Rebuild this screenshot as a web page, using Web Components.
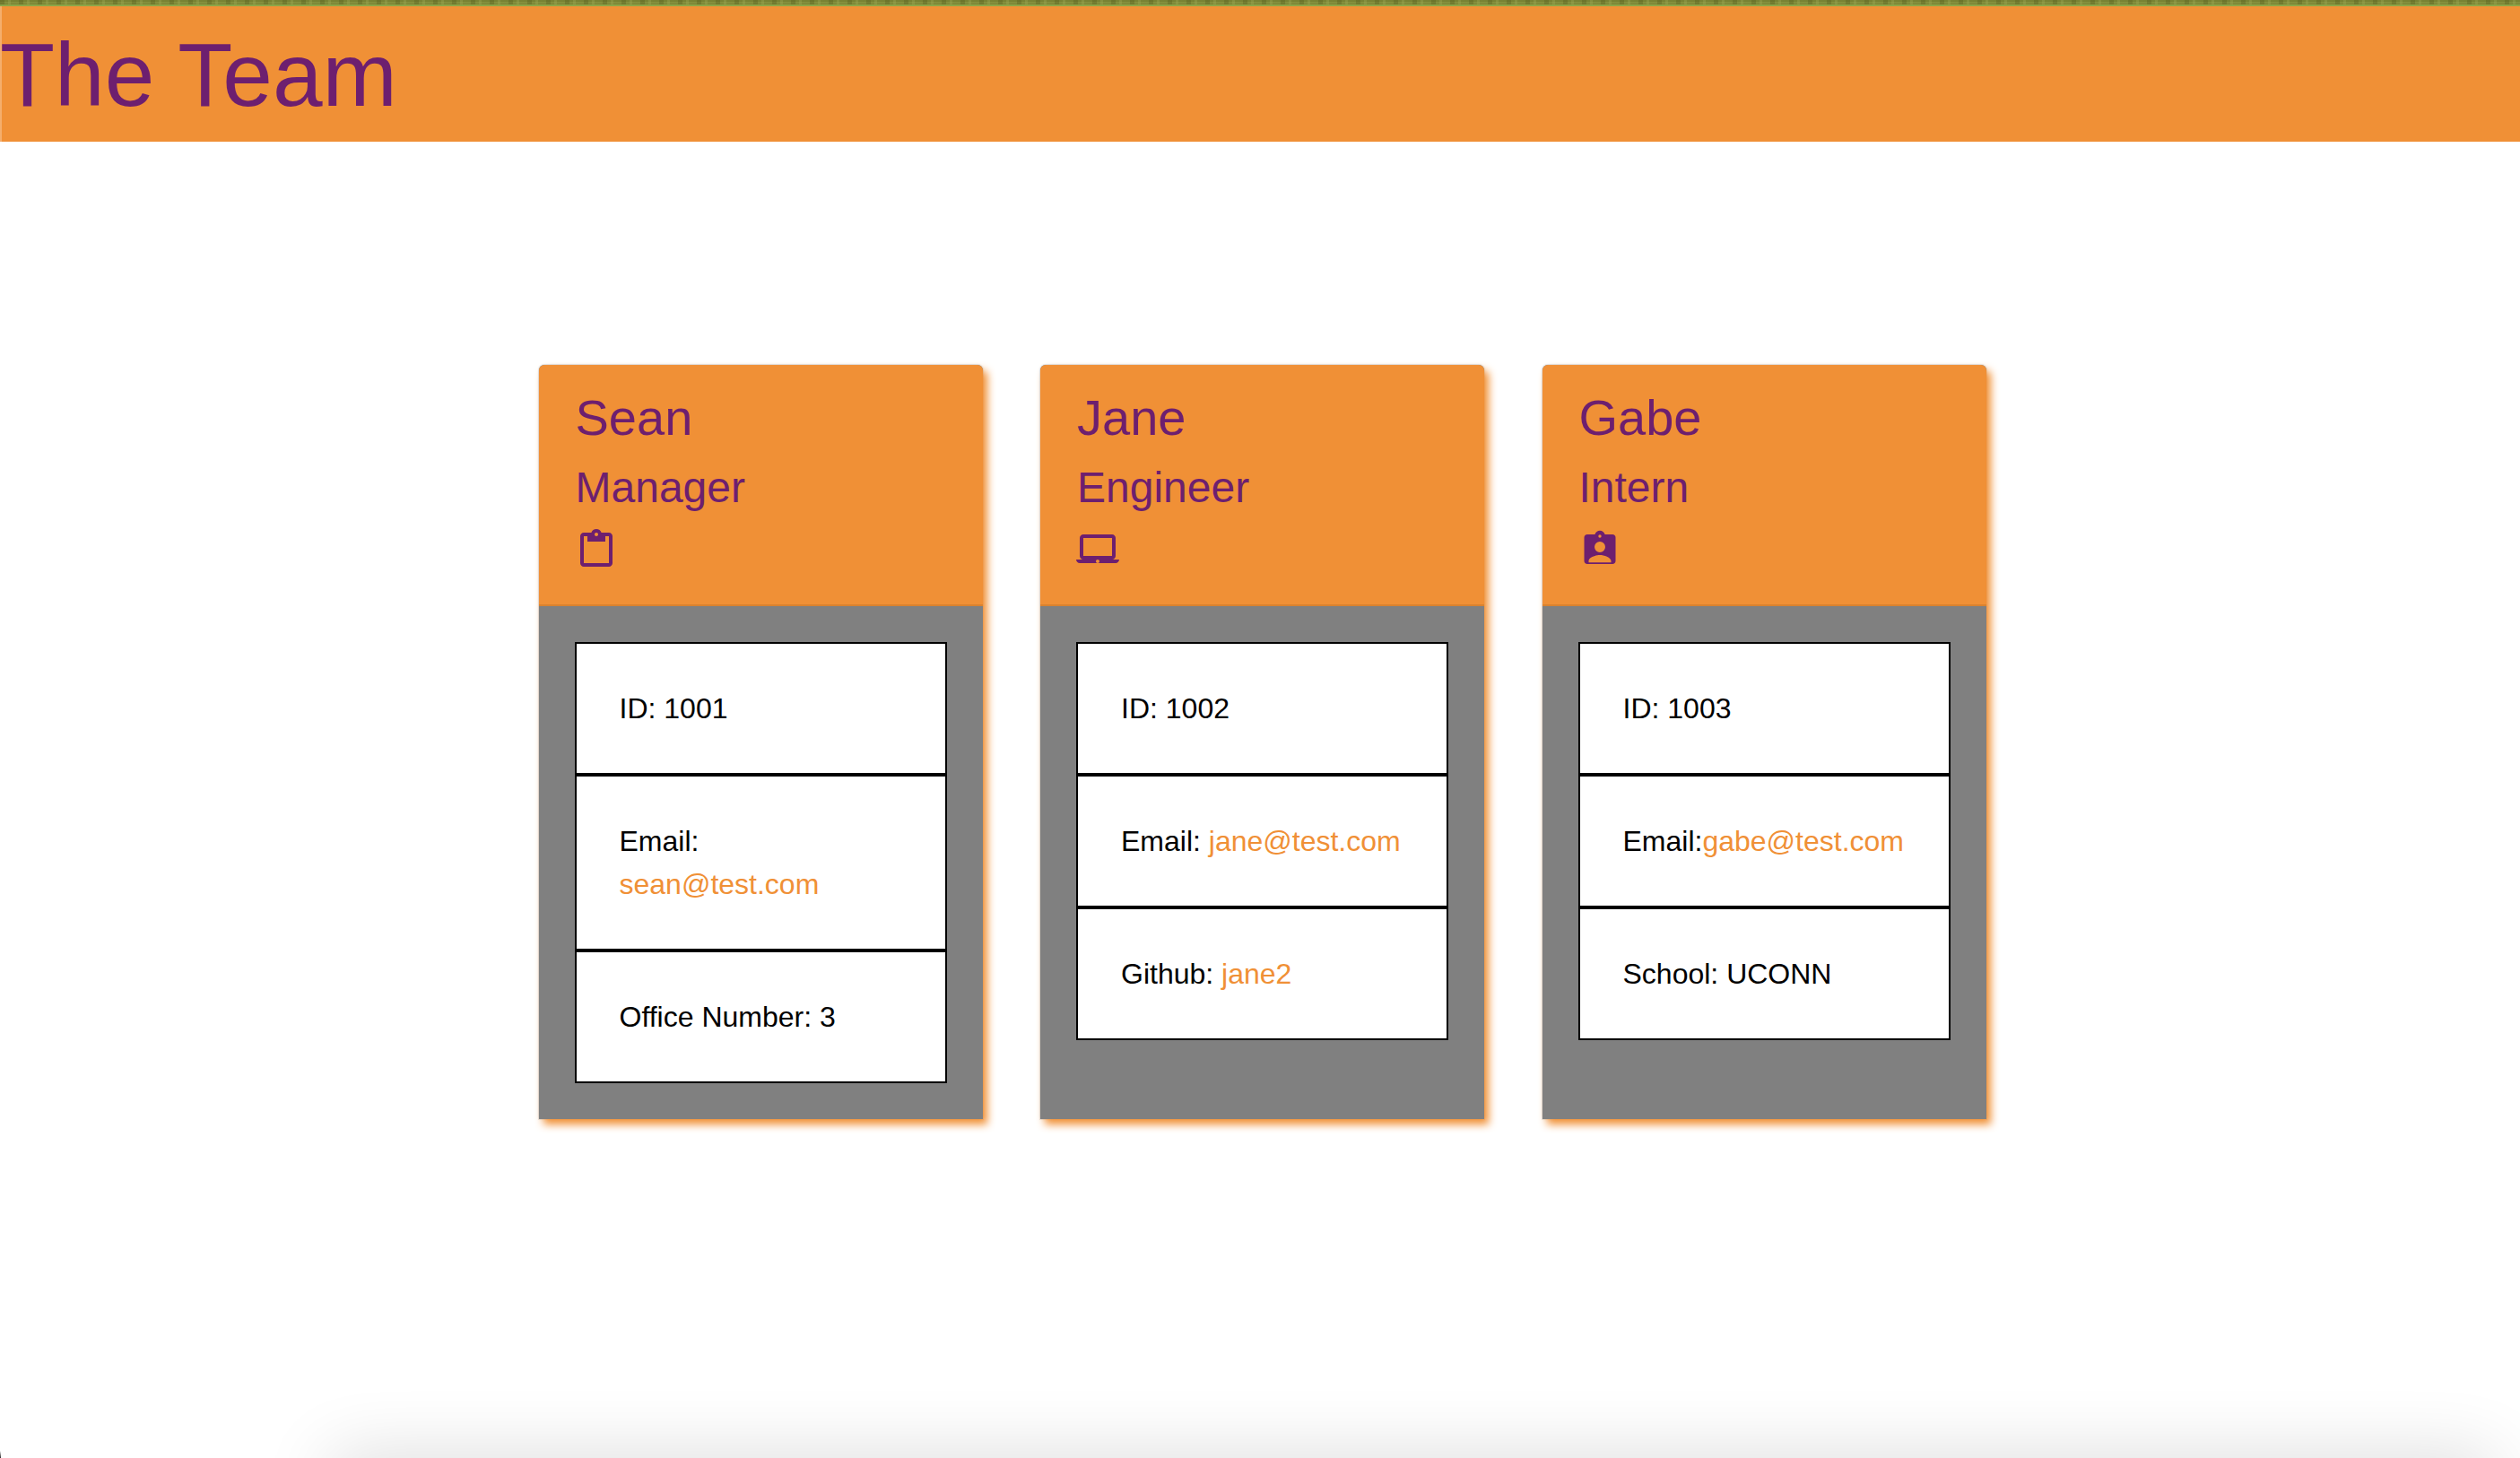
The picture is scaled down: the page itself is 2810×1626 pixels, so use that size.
<!DOCTYPE html>
<html>
<head>
<meta charset="utf-8">
<title>The Team</title>
<style>
html, body { margin: 0; padding: 0; height: 100%; background: #fff; overflow: hidden; }
body { font-family: "Liberation Sans", Arial, sans-serif; font-size: 32px; line-height: 48px; color: #000; }
</style>
</head>
<body>
<page-shell>
  <team-header slot="header">The Team</team-header>
  <employee-card name="Sean" role="Manager" icon="clipboard">
    <info-row>ID: 1001</info-row>
    <info-row>Email: <a>sean@test.com</a></info-row>
    <info-row>Office Number: 3</info-row>
  </employee-card>
  <employee-card name="Jane" role="Engineer" icon="laptop">
    <info-row>ID: 1002</info-row>
    <info-row>Email: <a>jane@test.com</a></info-row>
    <info-row>Github: <a>jane2</a></info-row>
  </employee-card>
  <employee-card name="Gabe" role="Intern" icon="badge">
    <info-row>ID: 1003</info-row>
    <info-row>Email:<a>gabe@test.com</a></info-row>
    <info-row>School: UCONN</info-row>
  </employee-card>
</page-shell>

<script>
// page frame: strip on top, header, row of cards
class PageShell extends HTMLElement {
  constructor() {
    super();
    this.attachShadow({mode: 'open'}).innerHTML = `
<style>
:host { display: block; position: relative; height: 1626px; overflow: hidden; }
.strip { height: 5px; background-color: #7f8a38;
  background-image:
    repeating-linear-gradient(90deg, rgba(80,85,25,.3) 0 5px, transparent 5px 9px, rgba(165,175,90,.3) 9px 12px, transparent 12px 21px),
    repeating-linear-gradient(180deg, rgba(80,85,25,.15) 0 2px, rgba(165,175,90,.12) 2px 4px); }
.strip-edge { height: 2px; background: #8ca648; }
.cards { display: flex; justify-content: center; gap: 64.5px; padding-top: 249px; align-items: flex-start; margin-left: 5px; }
.fade { position: absolute; left: 370px; right: 30px; bottom: -60px; height: 60px;
  box-shadow: 0 0 80px rgba(0,0,0,.16); }
.corner { position: absolute; left: 0; bottom: 0; width: 1px; height: 8px;
  background: linear-gradient(#fff, #222); }
</style>
<div class="strip"></div>
<div class="strip-edge"></div>
<slot name="header"></slot>
<div class="cards"><slot></slot></div>
<div class="fade"></div>
<div class="corner"></div>`;
  }
}

class TeamHeader extends HTMLElement {
  constructor() {
    super();
    this.attachShadow({mode: 'open'}).innerHTML = `
<style>
:host { display: block; height: 151px; background: #f09036; color: #6d1f6f;
  box-shadow: inset 2px 0 #f5ae6c; font-size: 100px; line-height: 153px; }
</style>
<slot></slot>`;
  }
}

const ICONS = {
  clipboard: '<path fill="currentColor" fill-rule="evenodd" d="M19 3h-4.200C14.400 1.800 13.300 1 12 1s-2.400.8-2.800 2H5c-1.100 0-2 .9-2 2v15c0 1.100.9 2 2 2h14c1.100 0 2-.9 2-2V5c0-1.100-.9-2-2-2zm-7 0c.6 0 1 .4 1 1s-.4 1-1 1-1-.4-1-1 .4-1 1-1zm7 17H5V5h2v3h10V5h2v15z"/>',
  laptop: '<path fill="currentColor" fill-rule="evenodd" d="M20 18c1.100 0 2-.9 2-2V6c0-1.100-.9-2-2-2H4c-1.100 0-2 .9-2 2v10c0 1.100.9 2 2 2H0c0 1.100.9 2 2 2h20c1.100 0 2-.9 2-2h-4zM4 6h16v10H4V6zm8 14c-.55 0-1-.45-1-1s.45-1 1-1 1 .45 1 1-.45 1-1 1z"/>',
  badge: '<path fill="currentColor" fill-rule="evenodd" d="M5 4h4.200C9.600 2.800 10.700 1.900 12 1.900s2.400.9 2.800 2.100H19c1 0 1.750.75 1.750 1.750v13c0 1-.75 1.750-1.750 1.750H5c-1 0-1.750-.75-1.750-1.750v-13C3.250 4.750 4 4 5 4zm7 .15a.85.85 0 1 0 0 1.700.85.85 0 0 0 0-1.700zM12 8a3 3 0 1 0 0 6 3 3 0 0 0 0-6zM5.750 19.600v-.8c0-2 4-3.300 6.250-3.300s6.250 1.300 6.250 3.300v.8z"/>'
};

class EmployeeCard extends HTMLElement {
  constructor() {
    super();
    this.attachShadow({mode: 'open'}).innerHTML = `
<style>
:host { display: block; width: 495px; height: 841px;
  box-shadow: 5px 6px 10px rgb(241,144,53), 0 0 0 1px rgba(0,0,0,.08), 0 0 3px rgba(0,0,0,.12);
  border-radius: 6px 6px 0 0; background: #808080; }
.top { height: 269px; box-sizing: border-box; padding: 25px 40px 0; background: #f09036; color: #6d1f6f;
  border-radius: 6px 6px 0 0; border-bottom: 2px solid #d9822f; }
.name { font-size: 56px; line-height: 67px; margin-left: 1px; }
.role { font-size: 48px; line-height: 58px; margin: 16px 0 0 1px; }
svg { display: block; width: 48px; height: 48px; margin-top: 15px; }
.body { padding: 40px 40px 0; }
.list { border: 2px solid #000; background: #fff; }
</style>
<div class="top">
  <div class="name"></div>
  <div class="role"></div>
  <svg viewBox="0 0 24 24"></svg>
</div>
<div class="body"><div class="list"><slot></slot></div></div>`;
  }
  connectedCallback() {
    const root = this.shadowRoot;
    root.querySelector('.name').textContent = this.getAttribute('name');
    root.querySelector('.role').textContent = this.getAttribute('role');
    root.querySelector('svg').innerHTML = ICONS[this.getAttribute('icon')];
  }
}

class InfoRow extends HTMLElement {
  constructor() {
    super();
    this.attachShadow({mode: 'open'}).innerHTML = `
<style>
:host { display: block; padding: 48px; }
:host(:not(:first-child)) { border-top: 4px solid #000; }
::slotted(a) { color: #f09036; }
</style>
<slot></slot>`;
  }
}

customElements.define('page-shell', PageShell);
customElements.define('team-header', TeamHeader);
customElements.define('employee-card', EmployeeCard);
customElements.define('info-row', InfoRow);
</script>
</body>
</html>
